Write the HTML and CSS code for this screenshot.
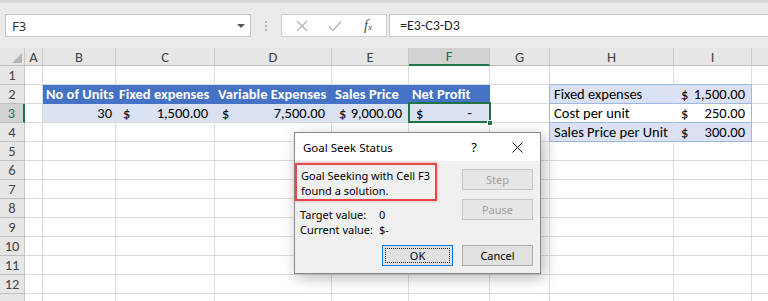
FILE: index.html
```html
<!DOCTYPE html>
<html>
<head>
<meta charset="utf-8">
<link rel="stylesheet" href="styles.css">
</head>
<body>
<div class="app">
  <div class="toolbar">
    <div class="namebox"><span>F3</span><span class="dd"></span></div>
    <div class="sep"><i></i><i></i><i></i></div>
    <div class="iconbox">
      <svg class="ic" width="12" height="12" viewBox="0 0 12 12"><path d="M1 1L11 11M11 1L1 11" stroke="#b4b4b4" stroke-width="1.3" fill="none"/></svg>
      <svg class="ic" width="14" height="12" viewBox="0 0 14 12"><path d="M1 6.5L5 10.5L13 1.5" stroke="#b4b4b4" stroke-width="1.3" fill="none"/></svg>
      <span class="fx">f<small>x</small></span>
    </div>
    <div class="formula">=E3-C3-D3</div>
  </div>

  <div class="sheet">
    <!-- header row -->
    <div class="h corner"><span class="tri"></span></div>
    <div class="h">A</div><div class="h">B</div><div class="h">C</div><div class="h">D</div><div class="h">E</div>
    <div class="h hsel">F</div><div class="h">G</div><div class="h">H</div><div class="h">I</div><div class="h"></div>
    <!-- row 1 -->
    <div class="h rh">1</div>
    <div class="c"></div><div class="c"></div><div class="c"></div><div class="c"></div><div class="c"></div>
    <div class="c"></div><div class="c"></div><div class="c tbtop"></div><div class="c tbtop"></div><div class="c"></div>
    <!-- row 2 -->
    <div class="h rh">2</div>
    <div class="c"></div>
    <div class="c th">No of Units</div>
    <div class="c th">Fixed expenses</div>
    <div class="c th">Variable Expenses</div>
    <div class="c th">Sales Price</div>
    <div class="c th">Net Profit</div>
    <div class="c tbleft"></div>
    <div class="c tl tbl">Fixed expenses</div>
    <div class="c tl tbr acc"><span>$</span><span>1,500.00</span></div>
    <div class="c"></div>
    <!-- row 3 -->
    <div class="h rh rsel">3</div>
    <div class="c"></div>
    <div class="c tl num">30</div>
    <div class="c tl acc"><span>$</span><span>1,500.00</span></div>
    <div class="c tl acc"><span>$</span><span>7,500.00</span></div>
    <div class="c tl acc"><span>$</span><span>9,000.00</span></div>
    <div class="c tl acc sel"><span>$</span><span class="dash">-</span><span class="handle"></span></div>
    <div class="c tbleft"></div>
    <div class="c tw tbl">Cost per unit</div>
    <div class="c tw tbr acc"><span>$</span><span>250.00</span></div>
    <div class="c"></div>
    <!-- row 4 -->
    <div class="h rh">4</div>
    <div class="c"></div><div class="c"></div><div class="c"></div><div class="c"></div><div class="c"></div><div class="c"></div>
    <div class="c tbleft"></div>
    <div class="c tl tbl">Sales Price per Unit</div>
    <div class="c tl tbr acc"><span>$</span><span>300.00</span></div>
    <div class="c"></div>
    <!-- rows 5-13 -->
    <div class="h rh">5</div><div class="c"></div><div class="c"></div><div class="c"></div><div class="c"></div><div class="c"></div><div class="c"></div><div class="c"></div><div class="c"></div><div class="c"></div><div class="c"></div>
    <div class="h rh">6</div><div class="c"></div><div class="c"></div><div class="c"></div><div class="c"></div><div class="c"></div><div class="c"></div><div class="c"></div><div class="c"></div><div class="c"></div><div class="c"></div>
    <div class="h rh">7</div><div class="c"></div><div class="c"></div><div class="c"></div><div class="c"></div><div class="c"></div><div class="c"></div><div class="c"></div><div class="c"></div><div class="c"></div><div class="c"></div>
    <div class="h rh">8</div><div class="c"></div><div class="c"></div><div class="c"></div><div class="c"></div><div class="c"></div><div class="c"></div><div class="c"></div><div class="c"></div><div class="c"></div><div class="c"></div>
    <div class="h rh">9</div><div class="c"></div><div class="c"></div><div class="c"></div><div class="c"></div><div class="c"></div><div class="c"></div><div class="c"></div><div class="c"></div><div class="c"></div><div class="c"></div>
    <div class="h rh">10</div><div class="c"></div><div class="c"></div><div class="c"></div><div class="c"></div><div class="c"></div><div class="c"></div><div class="c"></div><div class="c"></div><div class="c"></div><div class="c"></div>
    <div class="h rh">11</div><div class="c"></div><div class="c"></div><div class="c"></div><div class="c"></div><div class="c"></div><div class="c"></div><div class="c"></div><div class="c"></div><div class="c"></div><div class="c"></div>
    <div class="h rh">12</div><div class="c"></div><div class="c"></div><div class="c"></div><div class="c"></div><div class="c"></div><div class="c"></div><div class="c"></div><div class="c"></div><div class="c"></div><div class="c"></div>
    <div class="h rh"></div><div class="c"></div><div class="c"></div><div class="c"></div><div class="c"></div><div class="c"></div><div class="c"></div><div class="c"></div><div class="c"></div><div class="c"></div><div class="c"></div>
  </div>

  <div class="dialog">
    <div class="dtitle">
      <span class="dname">Goal Seek Status</span>
      <span class="help">?</span>
      <svg class="close" width="11" height="11" viewBox="0 0 11 11"><path d="M0.5 0.5L10.5 10.5M10.5 0.5L0.5 10.5" stroke="#111" stroke-width="1" fill="none"/></svg>
    </div>
    <div class="dbody">
      <div class="dtop">
        <div class="dleft">
          <div class="msg">Goal Seeking with Cell F3<br>found a solution.</div>
          <div class="vals">
            <span>Target value:</span><span>0</span>
            <span>Current value:</span><span>$-</span>
          </div>
        </div>
        <div class="dright">
          <div class="btn dis">Step</div>
          <div class="btn dis">Pause</div>
        </div>
      </div>
      <div class="dbottom">
        <div class="btn ok"><span>OK</span></div>
        <div class="btn">Cancel</div>
      </div>
    </div>
  </div>
</div>
</body>
</html>
```

FILE: styles.css
```css
* { box-sizing: border-box; }
html, body { margin: 0; padding: 0; background: #fff; }
.app {
  position: relative;
  width: 768px;
  height: 301px;
  overflow: hidden;
  font-family: Carlito, Lato, "Liberation Sans", sans-serif;
}

/* formula bar */
.toolbar {
  height: 48px;
  background: #ebebeb;
  border-top: 3px solid #d9d9d9;
  display: flex;
  align-items: flex-start;
  padding-top: 11px;
  padding-left: 5px;
}
.namebox {
  width: 246px;
  height: 23px;
  background: #fff;
  border: 1px solid #c6c6c6;
  display: flex;
  align-items: center;
  justify-content: space-between;
  padding: 0 5px 0 6px;
  font-family: "Noto Sans", sans-serif;
  font-size: 13px;
  color: #333;
}
.dd {
  width: 0; height: 0;
  border-left: 4px solid transparent;
  border-right: 4px solid transparent;
  border-top: 4px solid #555;
}
.sep {
  width: 30px;
  height: 23px;
  display: flex;
  flex-direction: column;
  align-items: center;
  justify-content: center;
  gap: 2px;
}
.sep i { display: block; width: 2px; height: 2px; background: #b3b3b3; }
.iconbox {
  width: 106px;
  height: 23px;
  background: #fff;
  border: 1px solid #d0d0d0;
  display: flex;
  align-items: center;
  padding-left: 14px;
  gap: 20px;
}
.fx {
  font-family: "Liberation Serif", serif;
  font-style: italic;
  font-size: 14px;
  color: #444;
  margin-left: 2px;
}
.fx small { font-size: 9px; }
.formula {
  flex: 1;
  height: 23px;
  margin-left: 2px;
  background: #fff;
  border: 1px solid #c6c6c6;
  border-right: none;
  display: flex;
  align-items: center;
  padding-left: 10px;
  font-size: 14px;
  color: #222;
}

/* sheet */
.sheet {
  display: grid;
  grid-template-columns: 25px 18px 73px 99px 117px 77px 81px 60px 124px 78px 40px;
  grid-template-rows: 18px;
  grid-auto-rows: 19px;
  font-size: 14.5px;
}
.c, .h {
  border-right: 1px solid #dcdcdc;
  border-bottom: 1px solid #dcdcdc;
  display: flex;
  align-items: center;
  white-space: nowrap;
  overflow: hidden;
  padding: 0 3px;
  color: #000;
}
.h {
  background: #e6e6e6;
  border-right-color: #c9c9c9;
  border-bottom-color: #bfbfbf;
  justify-content: center;
  color: #444;
  padding: 0;
}
.corner { position: relative; }
.tri {
  position: absolute;
  right: 2px;
  bottom: 2px;
  width: 10px;
  height: 10px;
  background: #b5b5b5;
  clip-path: polygon(100% 0, 100% 100%, 0 100%);
}
.hsel {
  background: #d2d2d2;
  color: #217346;
  border-bottom: 2px solid #217346;
}
.rsel {
  background: #d2d2d2;
  color: #217346;
  border-right: 2px solid #217346;
}
.th {
  background: #4472c4;
  border-color: #4472c4;
  color: #fff;
  font-weight: bold;
}
.tl { background: #d9e1f2; border-right-color: #d9e1f2; }
.tw { background: #fff; border-right-color: #fff; }
.num { justify-content: flex-end; }
.acc { justify-content: space-between; padding: 0 6px 0 7px; }
.tbtop { border-bottom-color: #9fb7e2; }
.tbleft { border-right-color: #9fb7e2; }
.tbl { border-bottom-color: #9fb7e2; padding-left: 4px; }
.tbr { border-bottom-color: #9fb7e2; border-right-color: #9fb7e2; }
.sel { position: relative; overflow: visible; padding-right: 17px; }
.sel::after {
  content: "";
  position: absolute;
  left: -1px; top: -2px; right: -2px; bottom: -1px;
  border: 2px solid #217346;
}
.handle {
  position: absolute;
  right: -4px;
  bottom: -4px;
  width: 6px;
  height: 6px;
  background: #217346;
  border: 1px solid #fff;
  z-index: 2;
}

/* dialog */
.dialog {
  position: absolute;
  left: 294px;
  top: 132px;
  width: 247px;
  height: 142px;
  background: #f0f0f0;
  border: 1px solid #8a8a8a;
  box-shadow: 3px 4px 14px rgba(0,0,0,0.28);
  display: flex;
  flex-direction: column;
  font-family: "Noto Sans", sans-serif;
  font-size: 11px;
  color: #000;
}
.dtitle {
  height: 28px;
  background: #fff;
  display: flex;
  align-items: center;
  padding-left: 8px;
  font-size: 11.5px;
}
.dname { flex: 1; }
.help { margin-right: 35px; font-size: 13px; }
.close { margin-right: 17px; }
.dbody {
  flex: 1;
  display: flex;
  flex-direction: column;
  padding: 2px 7px 7px 0;
}
.dtop { display: flex; justify-content: space-between; }
.msg {
  width: 142px;
  height: 38px;
  border: 2px solid #e8474c;
  box-shadow: 0 0 3px rgba(232,71,76,0.5);
  padding: 3px 0 0 4px;
  line-height: 15px;
}
.vals {
  margin-top: 6px;
  padding-left: 5px;
  display: grid;
  grid-template-columns: 79px auto;
  line-height: 15px;
}
.dright {
  margin-top: 6px;
  display: flex;
  flex-direction: column;
  gap: 9px;
}
.btn {
  width: 71px;
  height: 21px;
  background: #e1e1e1;
  border: 1px solid #adadad;
  display: flex;
  align-items: center;
  justify-content: center;
}
.btn.dis { color: #a0a0a0; border-color: #c6c6c6; background: #e6e6e6; }
.dbottom {
  margin-top: auto;
  display: flex;
  justify-content: flex-end;
  gap: 9px;
}
.btn.ok { border-color: #0078d7; padding: 2px; }
.btn.ok span {
  flex: 1;
  align-self: stretch;
  border: 1px dotted #222;
  display: flex;
  align-items: center;
  justify-content: center;
}
```
